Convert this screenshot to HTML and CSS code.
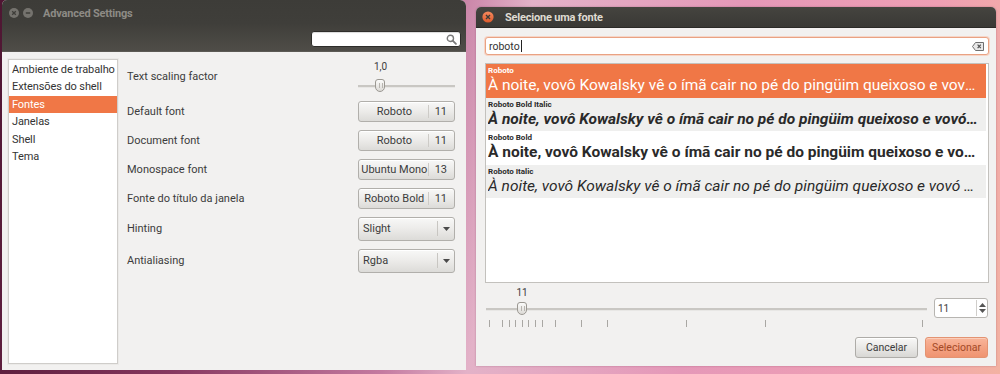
FILE: index.html
```html
<!DOCTYPE html>
<html lang="pt">
<head>
<meta charset="utf-8">
<title>Advanced Settings</title>
<link rel="stylesheet" href="styles.css">
</head>
<body>
<div class="desktop">
  <div class="win win-left">
    <div class="lt-head">
      <div class="lt-title">
        <span class="wbtn"><svg viewBox="0 0 10 10" width="10" height="10"><circle cx="5" cy="5" r="5" fill="#75736e"/><path d="M3.2 3.2 L6.8 6.8 M6.8 3.2 L3.2 6.8" stroke="#3f3e3a" stroke-width="1.3"/></svg></span>
        <span class="wbtn"><svg viewBox="0 0 10 10" width="10" height="10"><circle cx="5" cy="5" r="5" fill="#75736e"/><path d="M2.8 5 H7.2" stroke="#3f3e3a" stroke-width="1.4"/></svg></span>
        <span class="lt-name">Advanced Settings</span>
      </div>
      <div class="lt-toolbar">
        <div class="search">
          <svg viewBox="0 0 12 12" width="11" height="11"><circle cx="4.8" cy="4.8" r="3.4" fill="none" stroke="#7a7a7a" stroke-width="1.5"/><path d="M7.3 7.3 L10.8 10.8" stroke="#7a7a7a" stroke-width="2" stroke-linecap="round"/></svg>
        </div>
      </div>
    </div>
    <div class="lt-body">
      <ul class="side">
        <li>Ambiente de trabalho</li>
        <li>Extensões do shell</li>
        <li class="sel">Fontes</li>
        <li>Janelas</li>
        <li>Shell</li>
        <li>Tema</li>
      </ul>
      <div class="settings">
        <div class="row row-scale">
          <span class="lbl">Text scaling factor</span>
          <div class="hscale">
            <div class="hscale-val">1,0</div>
            <div class="hscale-track"><span class="hknob" style="left:17px"></span></div>
          </div>
        </div>
        <div class="row">
          <span class="lbl">Default font</span>
          <div class="fbtn"><span class="fname">Roboto</span><span class="fsize">11</span></div>
        </div>
        <div class="row">
          <span class="lbl">Document font</span>
          <div class="fbtn"><span class="fname">Roboto</span><span class="fsize">11</span></div>
        </div>
        <div class="row">
          <span class="lbl">Monospace font</span>
          <div class="fbtn"><span class="fname">Ubuntu Mono</span><span class="fsize">13</span></div>
        </div>
        <div class="row">
          <span class="lbl">Fonte do título da janela</span>
          <div class="fbtn"><span class="fname">Roboto Bold</span><span class="fsize">11</span></div>
        </div>
        <div class="row row-combo1">
          <span class="lbl">Hinting</span>
          <div class="combo"><span class="cval">Slight</span><span class="carrow"><svg viewBox="0 0 7 4" width="7" height="4"><path d="M0 0 H7 L3.5 4 Z" fill="#4a4a4a"/></svg></span></div>
        </div>
        <div class="row row-combo2">
          <span class="lbl">Antialiasing</span>
          <div class="combo"><span class="cval">Rgba</span><span class="carrow"><svg viewBox="0 0 7 4" width="7" height="4"><path d="M0 0 H7 L3.5 4 Z" fill="#4a4a4a"/></svg></span></div>
        </div>
      </div>
    </div>
  </div>

  <div class="win win-right">
    <div class="rt-title">
      <span class="rclose"><svg viewBox="0 0 12 12" width="12" height="12"><defs><linearGradient id="og" x1="0" y1="0" x2="0" y2="1"><stop offset="0" stop-color="#f78a5e"/><stop offset="1" stop-color="#dd5a2c"/></linearGradient></defs><circle cx="6" cy="6" r="5.6" fill="url(#og)"/><path d="M4 4 L8 8 M8 4 L4 8" stroke="#3c3b37" stroke-width="1.4"/></svg></span>
      <span class="rt-name">Selecione uma fonte</span>
    </div>
    <div class="rt-body">
      <div class="entry">
        <span class="etext">roboto</span><span class="caret"></span>
        <span class="eclear"><svg viewBox="0 0 12 9" width="12" height="9"><path d="M3.5 0.5 H11.5 V8.5 H3.5 L0.5 4.5 Z" fill="#e8e8e8" stroke="#6f6f6f" stroke-width="1"/><path d="M5.6 2.6 L8.8 6.2 M8.8 2.6 L5.6 6.2" stroke="#555" stroke-width="1.2"/></svg></span>
      </div>
      <div class="fontlist">
        <div class="frow sel">
          <div class="fr-name">Roboto</div>
          <div class="fr-sample">À noite, vovô Kowalsky vê o ímã cair no pé do pingüim queixoso e vovó põe açúcar no chá de tâmaras do jabuti feliz.</div>
        </div>
        <div class="frow alt">
          <div class="fr-name">Roboto Bold Italic</div>
          <div class="fr-sample s-bi">À noite, vovô Kowalsky vê o ímã cair no pé do pingüim queixoso e vovó põe açúcar no chá de tâmaras do jabuti feliz.</div>
        </div>
        <div class="frow">
          <div class="fr-name">Roboto Bold</div>
          <div class="fr-sample s-b">À noite, vovô Kowalsky vê o ímã cair no pé do pingüim queixoso e vovó põe açúcar no chá de tâmaras do jabuti feliz.</div>
        </div>
        <div class="frow alt">
          <div class="fr-name">Roboto Italic</div>
          <div class="fr-sample s-i">À noite, vovô Kowalsky vê o ímã cair no pé do pingüim queixoso e vovó põe açúcar no chá de tâmaras do jabuti feliz.</div>
        </div>
      </div>
      <div class="size-area">
        <div class="sscale">
          <div class="sval"><span style="left:36px">11</span></div>
          <div class="strack"><span class="sknob" style="left:31px"></span></div>
          <div class="sticks">
            <i style="left:3px"></i><i style="left:16px"></i><i style="left:22.7px"></i><i style="left:29.2px"></i><i style="left:35.8px"></i><i style="left:42.4px"></i><i style="left:48.9px"></i><i style="left:55.5px"></i><i style="left:68.6px"></i><i style="left:94.8px"></i><i style="left:121px"></i><i style="left:199.8px"></i><i style="left:278.5px"></i><i style="left:436px"></i>
          </div>
        </div>
        <div class="spin">
          <span class="spin-val">11</span>
          <span class="spin-arrows">
            <svg viewBox="0 0 7 4" width="7" height="4"><path d="M0 4 H7 L3.5 0 Z" fill="#555"/></svg>
            <svg viewBox="0 0 7 4" width="7" height="4"><path d="M0 0 H7 L3.5 4 Z" fill="#555"/></svg>
          </span>
        </div>
      </div>
      <div class="actions">
        <button class="btn">Cancelar</button>
        <button class="btn btn-sugg">Selecionar</button>
      </div>
    </div>
  </div>
</div>
</body>
</html>
```

FILE: styles.css
```css
* { box-sizing: border-box; }
html, body { margin: 0; padding: 0; }
body {
  width: 1000px;
  height: 374px;
  overflow: hidden;
  font-family: Roboto, "Liberation Sans", sans-serif;
  font-size: 11px;
  color: #3c3c3c;
  background: linear-gradient(100deg, #4e1632 0%, #86375f 22%, #c47aa0 42%, #e3b2c8 50%, #e598b8 70%, #ef9fb4 88%, #f3b2a2 100%);
}
.desktop {
  display: flex;
  align-items: flex-start;
  height: 374px;
  padding-left: 2px;
}

/* ---------- left window ---------- */
.win-left {
  width: 464px;
  height: 370px;
  background: #f2f1f0;
  border-radius: 5px 6px 0 0;
  overflow: hidden;
  display: flex;
  flex-direction: column;
}
.lt-head {
  height: 52px;
  background: linear-gradient(to bottom, #3d3c38 0%, #3f3e3a 45%, #4f4d48 100%);
  border-bottom: 1px solid #5c5a55;
}
.lt-title {
  height: 25px;
  display: flex;
  align-items: center;
  padding-left: 7px;
  padding-top: 1px;
}
.wbtn { display: flex; width: 10px; height: 10px; margin-right: 4px; }
.lt-name {
  margin-left: 6px;
  font-weight: bold;
  font-size: 11px;
  color: #8d8b85;
  letter-spacing: -0.2px;
}
.lt-toolbar {
  height: 26px;
  display: flex;
  justify-content: flex-end;
  align-items: flex-start;
  padding-top: 6px;
  padding-right: 5px;
}
.search {
  width: 150px;
  height: 16px;
  background: #fff;
  border: 1px solid #2e2d2a;
  border-radius: 3px;
  box-shadow: inset 0 1px 1px rgba(0,0,0,0.15);
  display: flex;
  align-items: center;
  justify-content: flex-end;
  padding-right: 3px;
}
.lt-body {
  flex: 1;
  display: flex;
  padding: 7px 11px 6px 6px;
  gap: 9px;
}
.side {
  list-style: none;
  margin: 0;
  padding: 1px 0 0 0;
  width: 110px;
  background: #fff;
  border: 1px solid #cfcdca;
  box-shadow: 0 0 0 1px #ebeae8;
}
.side li {
  height: 17.4px;
  line-height: 17.4px;
  padding-left: 3px;
  white-space: nowrap;
  color: #333;
  letter-spacing: -0.1px;
}
.side li.sel {
  background: #f07746;
  color: #fff;
}
.settings {
  flex: 1;
  display: flex;
  flex-direction: column;
}
.row {
  display: flex;
  align-items: center;
  justify-content: space-between;
  height: 29px;
}
.row-scale { height: 34px; margin-bottom: 4px; align-items: flex-start; }
.row-scale .lbl { margin-top: 11px; }
.row-combo1 { height: 31px; }
.row-combo2 { height: 33px; }
.lbl { color: #3c3c3c; }

.hscale { width: 97px; padding-top: 2px; }
.hscale-val {
  height: 12px;
  line-height: 12px;
  font-size: 10px;
  text-align: left;
  padding-left: 16px;
  color: #3c3c3c;
}
.hscale-track {
  position: relative;
  height: 14px;
  margin-top: 6px;
}
.hscale-track::before {
  content: "";
  position: absolute;
  left: 0; right: 0; top: 6px;
  height: 2px;
  background: #c9c7c3;
  border-bottom: 1px solid #e8e7e5;
}
.hknob, .sknob {
  position: absolute;
  top: 0;
  width: 10px;
  height: 13px;
  border: 1px solid #9b9892;
  border-radius: 3px 3px 5px 5px;
  background: linear-gradient(to bottom, #fbfbfa, #dcdad6);
}
.hknob::after, .sknob::after {
  content: "";
  position: absolute;
  left: 3px; top: 3px;
  width: 2px; height: 5px;
  border-left: 1px solid #b8b5b0;
  border-right: 1px solid #b8b5b0;
}

.fbtn, .combo {
  width: 97px;
  height: 21px;
  display: flex;
  align-items: center;
  border: 1px solid #b1afab;
  border-radius: 3px;
  background: linear-gradient(to bottom, #f8f8f7 0%, #ecebe9 50%, #dcdbd8 100%);
  box-shadow: inset 0 1px 0 #ffffff;
  color: #3c3c3c;
  white-space: nowrap;
}
.fname { flex: 1; text-align: center; padding-left: 2px; }
.fsize {
  padding: 0 7px 0 6px;
  border-left: 1px solid #cdcbc7;
  line-height: 13px;
}
.combo { height: 24px; }
.cval { flex: 1; padding-left: 4px; }
.carrow {
  width: 17px;
  height: 15px;
  border-left: 1px solid #c8c6c2;
  display: flex;
  align-items: center;
  justify-content: center;
  padding-left: 1px;
}

/* ---------- right window ---------- */
.win-right {
  width: 520px;
  height: 359px;
  margin-top: 7px;
  margin-left: 10px;
  background: #f2f1f0;
  border-radius: 5px 5px 0 0;
  overflow: hidden;
  display: flex;
  flex-direction: column;
  box-shadow: 0 0 2px rgba(80,20,50,0.35);
}
.rt-title {
  height: 21px;
  background: linear-gradient(to bottom, #45443f, #3a3935);
  display: flex;
  align-items: center;
  padding-left: 6px;
  border-bottom: 1px solid #2b2a27;
}
.rclose { display: flex; width: 12px; height: 12px; }
.rt-name {
  margin-left: 11px;
  font-weight: bold;
  font-size: 11px;
  color: #dfdbd2;
  letter-spacing: -0.2px;
}
.rt-body {
  flex: 1;
  display: flex;
  flex-direction: column;
  padding: 9px 7px 8px 9px;
}
.entry {
  height: 18px;
  background: #fff;
  border: 1px solid #e9a283;
  border-radius: 3px;
  box-shadow: 0 0 0 1px #f6d6c8;
  display: flex;
  align-items: center;
  padding: 0 4px 0 3px;
  font-size: 10.5px;
  color: #333;
}
.caret {
  width: 1px;
  height: 12px;
  background: #222;
  margin-left: 1px;
}
.eclear { margin-left: auto; display: flex; }
.fontlist {
  margin-top: 8px;
  height: 220px;
  background: #fff;
  border: 1px solid #c3c1bd;
  padding: 0 2px 0 0;
  overflow: hidden;
}
.frow {
  height: 33.5px;
  padding: 2px 8px 0 2px;
  background: #fff;
  color: #2a2a2a;
  overflow: hidden;
}
.frow.alt { background: #efefee; }
.frow.sel { background: #f07746; color: #fff; }
.fr-name {
  font-size: 8px;
  font-weight: bold;
  line-height: 10px;
  height: 10px;
}
.fr-sample {
  font-size: 15.5px;
  line-height: 19px;
  white-space: nowrap;
  overflow: hidden;
  text-overflow: ellipsis;
  font-family: Roboto, sans-serif;
}
.s-b { font-weight: bold; }
.s-bi { font-weight: bold; font-style: italic; }
.s-i { font-style: italic; }

.size-area {
  height: 48px;
  display: flex;
  align-items: flex-start;
  gap: 7px;
  padding-left: 1px;
}
.sscale { width: 441px; }
.sval {
  position: relative;
  height: 12px;
  margin-top: 4px;
  font-size: 10px;
  line-height: 12px;
}
.sval span { position: absolute; top: 0; transform: translateX(-50%); }
.strack {
  position: relative;
  height: 14px;
  margin-top: 3px;
}
.strack::before {
  content: "";
  position: absolute;
  left: 0; right: 0; top: 6px;
  height: 2px;
  background: #c9c7c3;
  border-bottom: 1px solid #e8e7e5;
}
.sticks {
  position: relative;
  height: 8px;
  margin-top: 4px;
}
.sticks i {
  position: absolute;
  top: 0;
  width: 1px;
  height: 7px;
  background: #a9a7a3;
}
.spin {
  margin-top: 15px;
  width: 54px;
  height: 20px;
  background: #fff;
  border: 1px solid #b7b5b1;
  border-radius: 3px;
  display: flex;
  align-items: center;
  padding-left: 3px;
  font-size: 10px;
}
.spin-val { flex: 1; }
.spin-arrows {
  width: 11px;
  height: 16px;
  border-left: 1px solid #d0cecb;
  display: flex;
  flex-direction: column;
  align-items: center;
  justify-content: center;
  gap: 2px;
}
.actions {
  margin-top: auto;
  display: flex;
  justify-content: flex-end;
  gap: 7px;
  padding-right: 1px;
}
.btn {
  width: 63px;
  height: 21px;
  border: 1px solid #aeaca8;
  border-radius: 3px;
  background: linear-gradient(to bottom, #f8f8f7 0%, #e8e7e5 55%, #d8d7d4 100%);
  box-shadow: inset 0 1px 0 #fff;
  font-family: Roboto, sans-serif;
  font-size: 10.5px;
  color: #3c3c3c;
  padding: 0;
}
.btn-sugg {
  border-color: #e39372;
  background: linear-gradient(to bottom, #f8b59a 0%, #f4a181 55%, #ef9471 100%);
  box-shadow: inset 0 1px 0 #fbcdb9;
  color: #a34a28;
}
```
